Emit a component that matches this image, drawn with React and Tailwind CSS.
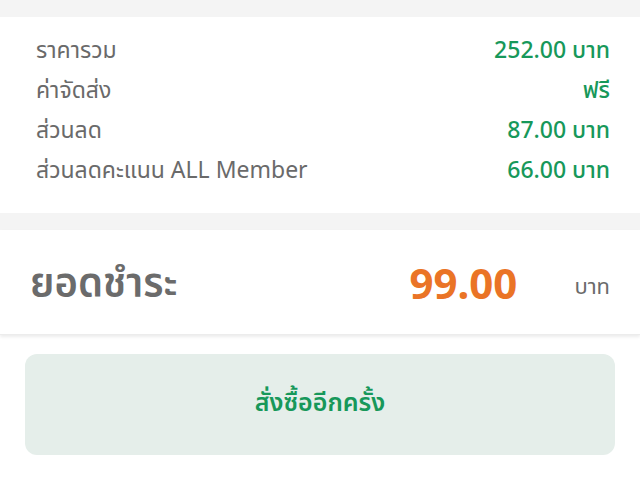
export default function App() {
  const rows = [
    { label: "ราคารวม", value: "252.00 บาท" },
    { label: "ค่าจัดส่ง", value: "ฟรี" },
    { label: "ส่วนลด", value: "87.00 บาท" },
    { label: "ส่วนลดคะแนน ALL Member", value: "66.00 บาท" },
  ];

  return (
    <div
      className="w-[640px] h-[480px] bg-white overflow-hidden"
      style={{ fontFamily: '"Noto Sans", "Noto Sans Thai", sans-serif' }}
    >
      <div className="h-[17px] bg-[#f4f4f4]" />

      <div className="bg-white pl-[36px] pr-[30px] pt-[12px] pb-[24px] flex flex-col">
        {rows.map((row) => (
          <div key={row.label} className="h-[40px] flex items-center justify-between text-[23px]">
            <span className="text-[#6a6a6a]">{row.label}</span>
            <span className="text-[#17985a] font-medium">{row.value}</span>
          </div>
        ))}
      </div>

      <div className="h-[17px] bg-[#f4f4f4]" />

      <div className="h-[105px] bg-white flex items-center pl-[30px] pr-[30px] shadow-[0_2px_3px_rgba(0,0,0,0.08)] border-b border-[#ececec]">
        <span className="text-[40px] font-semibold text-[#6b6b6b] flex-1">ยอดชำระ</span>
        <span className="text-[42px] font-bold text-[#ea7426] w-[112px]">99.00</span>
        <span className="text-[22px] text-[#6b6b6b] ml-[53px] mt-[6px]">บาท</span>
      </div>

      <div className="px-[25px] pt-[19px]">
        <button className="w-full h-[101px] pb-[6px] rounded-[12px] bg-[#e5eeea] text-[#17985a] text-[25px] font-semibold flex items-center justify-center">
          สั่งซื้ออีกครั้ง
        </button>
      </div>
    </div>
  );
}
